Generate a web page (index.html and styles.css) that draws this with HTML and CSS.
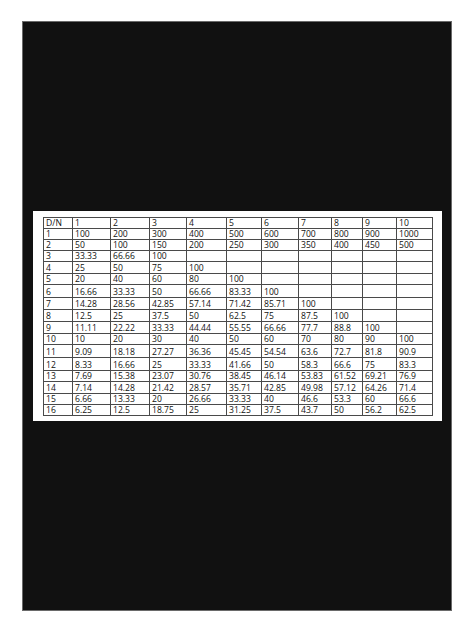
FILE: index.html
```html
<!DOCTYPE html>
<html>
<head>
<meta charset="utf-8">
<link rel="stylesheet" href="styles.css">
</head>
<body>
<div class="frame">
  <div class="sheet">
    <div class="grid">
      <div>D/N</div><div>1</div><div>2</div><div>3</div><div>4</div><div>5</div><div>6</div><div>7</div><div>8</div><div>9</div><div>10</div>
      <div>1</div><div>100</div><div>200</div><div>300</div><div>400</div><div>500</div><div>600</div><div>700</div><div>800</div><div>900</div><div>1000</div>
      <div>2</div><div>50</div><div>100</div><div>150</div><div>200</div><div>250</div><div>300</div><div>350</div><div>400</div><div>450</div><div>500</div>
      <div>3</div><div>33.33</div><div>66.66</div><div>100</div><div></div><div></div><div></div><div></div><div></div><div></div><div></div>
      <div>4</div><div>25</div><div>50</div><div>75</div><div>100</div><div></div><div></div><div></div><div></div><div></div><div></div>
      <div>5</div><div>20</div><div>40</div><div>60</div><div>80</div><div>100</div><div></div><div></div><div></div><div></div><div></div>
      <div>6</div><div>16.66</div><div>33.33</div><div>50</div><div>66.66</div><div>83.33</div><div>100</div><div></div><div></div><div></div><div></div>
      <div>7</div><div>14.28</div><div>28.56</div><div>42.85</div><div>57.14</div><div>71.42</div><div>85.71</div><div>100</div><div></div><div></div><div></div>
      <div>8</div><div>12.5</div><div>25</div><div>37.5</div><div>50</div><div>62.5</div><div>75</div><div>87.5</div><div>100</div><div></div><div></div>
      <div>9</div><div>11.11</div><div>22.22</div><div>33.33</div><div>44.44</div><div>55.55</div><div>66.66</div><div>77.7</div><div>88.8</div><div>100</div><div></div>
      <div>10</div><div>10</div><div>20</div><div>30</div><div>40</div><div>50</div><div>60</div><div>70</div><div>80</div><div>90</div><div>100</div>
      <div>11</div><div>9.09</div><div>18.18</div><div>27.27</div><div>36.36</div><div>45.45</div><div>54.54</div><div>63.6</div><div>72.7</div><div>81.8</div><div>90.9</div>
      <div>12</div><div>8.33</div><div>16.66</div><div>25</div><div>33.33</div><div>41.66</div><div>50</div><div>58.3</div><div>66.6</div><div>75</div><div>83.3</div>
      <div>13</div><div>7.69</div><div>15.38</div><div>23.07</div><div>30.76</div><div>38.45</div><div>46.14</div><div>53.83</div><div>61.52</div><div>69.21</div><div>76.9</div>
      <div>14</div><div>7.14</div><div>14.28</div><div>21.42</div><div>28.57</div><div>35.71</div><div>42.85</div><div>49.98</div><div>57.12</div><div>64.26</div><div>71.4</div>
      <div>15</div><div>6.66</div><div>13.33</div><div>20</div><div>26.66</div><div>33.33</div><div>40</div><div>46.6</div><div>53.3</div><div>60</div><div>66.6</div>
      <div>16</div><div>6.25</div><div>12.5</div><div>18.75</div><div>25</div><div>31.25</div><div>37.5</div><div>43.7</div><div>50</div><div>56.2</div><div>62.5</div>
    </div>
  </div>
</div>
</body>
</html>
```

FILE: styles.css
```css
html, body {
  margin: 0;
  padding: 0;
  background: #ffffff;
}

.frame {
  box-sizing: border-box;
  width: 430px;
  height: 590px;
  margin: 21px 0 0 22px;
  background: #111111;
  border: 1px solid #6a6a6a;
  padding: 189px 0 0 10px;
}

.sheet {
  box-sizing: border-box;
  width: 409px;
  height: 210px;
  background: #ffffff;
  padding: 6px 0 0 10px;
}

.grid {
  display: grid;
  width: max-content;
  grid-template-columns: 29px 38px 39px 37px 40px 35px 37px 33px 31px 34px 36px;
  grid-template-rows: 11px 11px 11px 11px 12px 11px 13px 12px 12px 12px 11px 13px 13px 11px 12px 11px 11px;
  border-left: 1px solid #4a4a4a;
  border-top: 1px solid #4a4a4a;
  font-family: "Open Sans", "Liberation Sans", sans-serif;
  font-size: 8.6px;
  color: #111111;
}

.grid > div {
  box-sizing: border-box;
  border-right: 1px solid #4a4a4a;
  border-bottom: 1px solid #4a4a4a;
  padding: 0 0 0 2px;
  display: flex;
  align-items: flex-end;
  line-height: 10px;
  white-space: nowrap;
  overflow: hidden;
}
```
